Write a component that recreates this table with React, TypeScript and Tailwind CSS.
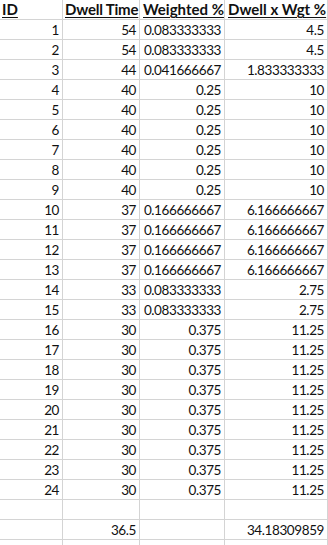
import React from 'react'

const rows: [number, string, string][] = [
  [54, '0.083333333', '4.5'],
  [54, '0.083333333', '4.5'],
  [44, '0.041666667', '1.833333333'],
  [40, '0.25', '10'],
  [40, '0.25', '10'],
  [40, '0.25', '10'],
  [40, '0.25', '10'],
  [40, '0.25', '10'],
  [40, '0.25', '10'],
  [37, '0.166666667', '6.166666667'],
  [37, '0.166666667', '6.166666667'],
  [37, '0.166666667', '6.166666667'],
  [37, '0.166666667', '6.166666667'],
  [33, '0.083333333', '2.75'],
  [33, '0.083333333', '2.75'],
  [30, '0.375', '11.25'],
  [30, '0.375', '11.25'],
  [30, '0.375', '11.25'],
  [30, '0.375', '11.25'],
  [30, '0.375', '11.25'],
  [30, '0.375', '11.25'],
  [30, '0.375', '11.25'],
  [30, '0.375', '11.25'],
  [30, '0.375', '11.25'],
]

const cols = 'grid grid-cols-[63px_77px_85px_103px]'
const cell = 'h-5 border-r border-b border-[#d4d4d4] flex items-end pb-[2px] leading-none whitespace-nowrap'
const num = cell + ' justify-end pr-[3px] text-[13.5px] tracking-[-0.4px]'
const head = cell + ' font-bold text-[15px]'

function Row({ cells }: { cells: string[] }) {
  return (
    <div className={cols}>
      {cells.map((c, i) => (
        <div key={i} className={num}>
          {c}
        </div>
      ))}
    </div>
  )
}

export default function App() {
  return (
    <div
      className="w-[328px] h-[545px] overflow-hidden bg-white text-[#111]"
      style={{ fontFamily: 'Lato, "Open Sans", sans-serif' }}
    >
      <div className={cols}>
        <div className={head + ' pl-[2px]'}>
          <span className="underline underline-offset-[2px]">ID</span>
        </div>
        <div className={head + ' pl-[2px] tracking-[-0.2px]'}>
          <span className="underline underline-offset-[2px]">Dwell Time</span>
        </div>
        <div className={head + ' pl-[3px]'}>
          <span className="underline underline-offset-[2px]">Weighted %</span>
        </div>
        <div className={head + ' pl-[3px]'}>
          <span className="underline underline-offset-[2px]">Dwell x Wgt %</span>
        </div>
      </div>
      {rows.map((r, i) => (
        <Row key={i} cells={[String(i + 1), String(r[0]), r[1], r[2]]} />
      ))}
      <Row cells={['', '', '', '']} />
      <Row cells={['', '36.5', '', '34.18309859']} />
      <Row cells={['', '', '', '']} />
    </div>
  )
}
